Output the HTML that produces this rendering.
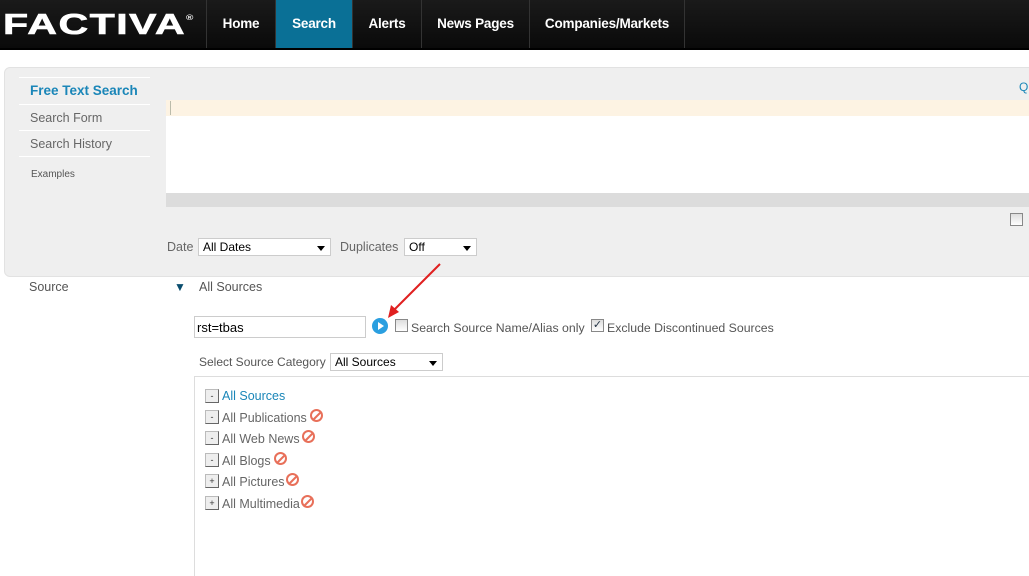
<!DOCTYPE html>
<html><head><meta charset="utf-8"><style>
*{margin:0;padding:0;box-sizing:border-box}
body{width:1029px;height:575px;overflow:hidden;background:#fff;font-family:"Liberation Sans",Arial,sans-serif;position:relative;font-size:12px;color:#555}
.hdr{position:absolute;left:0;top:0;width:1029px;height:50px;background:linear-gradient(#1a1a1a,#0a0a0a);border-bottom:2px solid #000}
.logo{position:absolute;left:3px;top:9px;color:#fff;font-weight:bold;font-size:29px;letter-spacing:1px;transform:scaleX(1.42);transform-origin:left top;font-family:"Liberation Sans",sans-serif;-webkit-text-stroke:0.6px #fff}
.logo sup{font-size:7px;vertical-align:14px;letter-spacing:0;-webkit-text-stroke:0}
.nav{position:absolute;top:0;height:48px;color:#fff;font-size:13.5px;font-weight:bold;line-height:48px;text-align:center;border-left:1px solid #333;letter-spacing:-0.2px}
.panel{position:absolute;left:4px;top:67px;width:1040px;height:210px;background:#efefef;border:1px solid #e2e2e2;border-radius:6px}
.a{position:absolute;white-space:nowrap}
.side{position:absolute;left:19px;width:131px;border-top:1px solid #fff}
.sel{position:absolute;height:18px;background:#fff;border:1px solid #ccc;font-size:12px;color:#000;padding:1px 4px;line-height:14px}
.sel:after{content:"";position:absolute;right:5px;top:7px;border:4px solid transparent;border-top:5px solid #000}
.cb{position:absolute;width:13px;height:13px;border:1px solid #888;background:linear-gradient(#ddd,#fff)}
.bx{position:absolute;left:205px;width:14px;height:14px;border:1px solid #bbb;border-right-color:#666;border-bottom-color:#666;background:#eee;font-size:9px;line-height:12px;text-align:center;color:#333}
.no{position:absolute;width:13px;height:13px;border:2px solid #e8705a;border-radius:50%}
.no:after{content:"";position:absolute;left:4px;top:-1px;width:2px;height:12px;background:#e8705a;transform:rotate(45deg)}
.it{position:absolute;left:222px;font-size:12.5px;color:#666}
</style></head><body>
<div class="hdr">
<div class="logo">FACTIVA<sup>®</sup></div>
<div class="nav" style="left:206px;width:69px">Home</div>
<div class="nav" style="left:275px;width:77px;background:#0a7096">Search</div>
<div class="nav" style="left:352px;width:69px">Alerts</div>
<div class="nav" style="left:421px;width:108px">News Pages</div>
<div class="nav" style="left:529px;width:156px;border-right:1px solid #333">Companies/Markets</div>
</div>
<div class="panel"></div>
<div class="side" style="top:77px;height:28px"></div>
<div class="a" style="left:30px;top:83px;color:#1a86b8;font-size:13.5px;font-weight:bold">Free Text Search</div>
<div class="side" style="top:104px"></div>
<div class="a" style="left:30px;top:111px;font-size:12.5px;color:#666">Search Form</div>
<div class="side" style="top:130px"></div>
<div class="a" style="left:30px;top:137px;font-size:12.5px;color:#666">Search History</div>
<div class="side" style="top:156px"></div>
<div class="a" style="left:31px;top:169px;font-size:10px">Examples</div>
<div class="a" style="left:1019px;top:80px;color:#1a86b8">Q</div>
<div class="a" style="left:166px;top:100px;width:870px;height:93px;background:#fff"></div>
<div class="a" style="left:166px;top:100px;width:870px;height:16px;background:#fdf3e3"></div>
<div class="a" style="left:170px;top:101px;width:1px;height:14px;background:#bba"></div>
<div class="a" style="left:166px;top:193px;width:870px;height:14px;background:#dcdcdc"></div>
<div class="cb" style="left:1010px;top:213px"></div>
<div class="a" style="left:167px;top:240px;font-size:12.5px;color:#666">Date</div>
<div class="sel" style="left:198px;top:238px;width:133px">All Dates</div>
<div class="a" style="left:340px;top:240px;font-size:12.5px;color:#666">Duplicates</div>
<div class="sel" style="left:404px;top:238px;width:73px">Off</div>
<div class="a" style="left:29px;top:280px;font-size:12.5px">Source</div>
<div class="a" style="left:174px;top:280px;color:#0a4d6e;font-size:12px">▼</div>
<div class="a" style="left:199px;top:280px;font-size:12.5px">All Sources</div>
<svg class="a" style="left:380px;top:260px" width="70" height="60"><line x1="60" y1="4" x2="12" y2="52" stroke="#e02020" stroke-width="2"/><polygon points="8,58 11,45 19,52" fill="#e02020"/></svg>
<div class="a" style="left:194px;top:316px;width:172px;height:22px;border:1px solid #ccc;background:#fff;color:#000;font-size:13px;padding:3px 2px">rst=tbas</div>
<div class="a" style="left:372px;top:318px;width:16px;height:16px;border-radius:50%;background:#2a9fe0"><div style="position:absolute;left:6px;top:4px;border:4px solid transparent;border-left:6px solid #fff"></div></div>
<div class="cb" style="left:395px;top:319px"></div>
<div class="a" style="left:411px;top:321px;font-size:12.3px">Search Source Name/Alias only</div>
<div class="cb" style="left:591px;top:319px;font-size:11px;line-height:11px;text-align:center;color:#234">✓</div>
<div class="a" style="left:607px;top:321px;font-size:12.3px">Exclude Discontinued Sources</div>
<div class="a" style="left:199px;top:355px;font-size:12px">Select Source Category</div>
<div class="sel" style="left:330px;top:353px;width:113px">All Sources</div>
<div class="a" style="left:194px;top:376px;width:840px;height:200px;border-left:1px solid #ddd;border-top:1px solid #ddd"></div>
<div class="bx" style="top:389px">-</div><div class="it" style="top:389px;color:#1a86b8">All Sources</div>
<div class="bx" style="top:410px">-</div><div class="it" style="top:411px">All Publications</div><div class="no" style="left:310px;top:409px"></div>
<div class="bx" style="top:431px">-</div><div class="it" style="top:432px">All Web News</div><div class="no" style="left:302px;top:430px"></div>
<div class="bx" style="top:453px">-</div><div class="it" style="top:454px">All Blogs</div><div class="no" style="left:274px;top:452px"></div>
<div class="bx" style="top:474px">+</div><div class="it" style="top:475px">All Pictures</div><div class="no" style="left:286px;top:473px"></div>
<div class="bx" style="top:496px">+</div><div class="it" style="top:497px">All Multimedia</div><div class="no" style="left:301px;top:495px"></div>
</body></html>
